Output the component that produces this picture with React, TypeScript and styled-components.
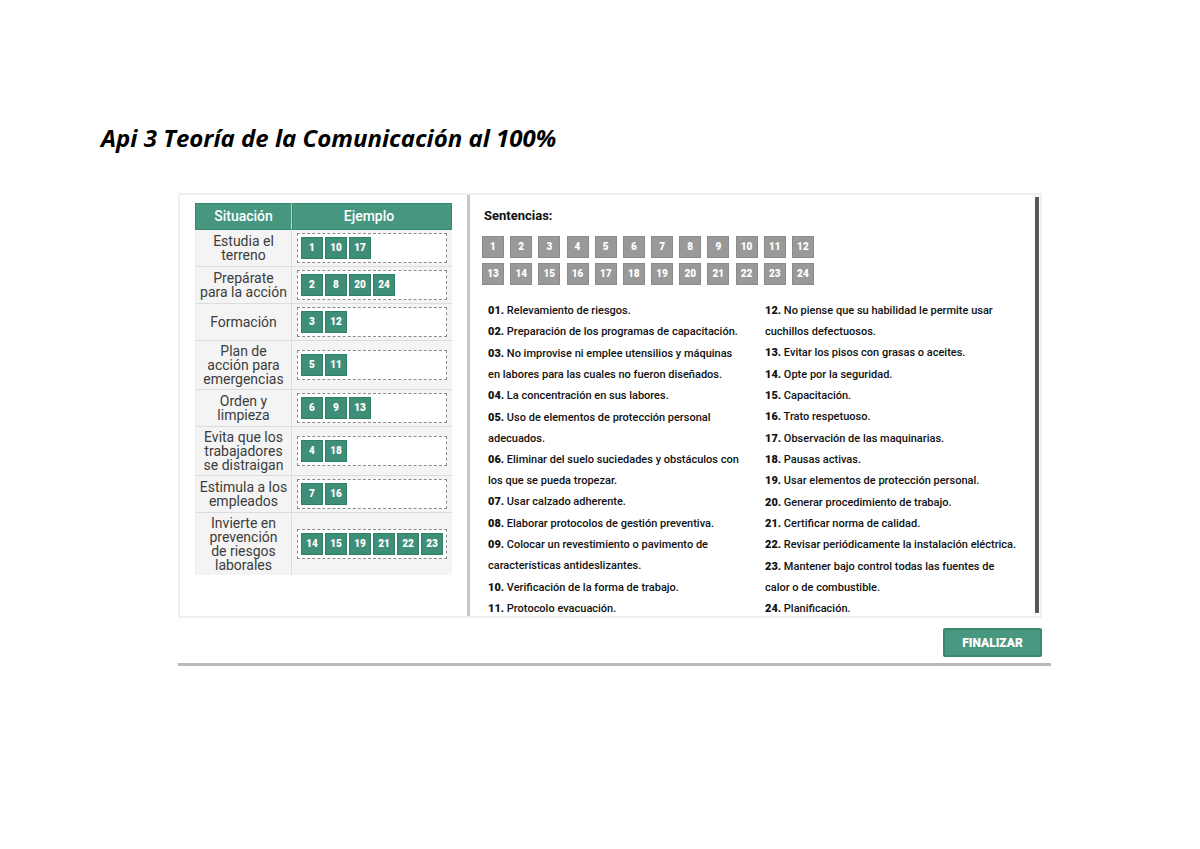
import React from "react";
import styled, { createGlobalStyle } from "styled-components";

const GlobalStyle = createGlobalStyle`
  * { box-sizing: border-box; }
  body {
    margin: 0;
    background: #fff;
    color: #111;
    font-family: Roboto, "Liberation Sans", sans-serif;
  }
`;

const Page = styled.main`
  padding: 120px 149px 40px 101px;
`;

const Title = styled.h1`
  margin: 0;
  font-family: "Comic Sans MS", "Open Sans", sans-serif;
  font-size: 24px;
  line-height: 36px;
  font-weight: 700;
  font-style: italic;
  color: #000;
`;

const Activity = styled.section`
  margin: 37px 0 0 77px;
  padding-bottom: 6px;
  border-bottom: 3px solid #b6babd;
`;

const Panel = styled.div`
  display: flex;
  min-height: 425px;
  margin-right: 9px;
  border: 2px solid #efefef;
`;

const MatchPane = styled.div`
  flex: 0 0 287px;
  padding: 8px 15px;
`;

const MatchTable = styled.table`
  width: 100%;
  border-collapse: separate;
  border-spacing: 0;
  table-layout: fixed;
  background: #f4f4f4;
`;

const HeadCell = styled.th<{ $first?: boolean }>`
  width: ${(p) => (p.$first ? "97px" : "auto")};
  height: 27px;
  padding: ${(p) => (p.$first ? "0 0 2px" : "0 6px 2px 0")};
  border: 1px solid #3a8770;
  border-right-color: ${(p) => (p.$first ? "#a5dccb" : "#3a8770")};
  background: #469680;
  color: #fff;
  font-size: 14px;
  line-height: 16px;
  font-weight: 500;
`;

const Row = styled.tr`
  &:not(:last-child) > * {
    border-bottom: 1px solid #dcdcdc;
  }
`;

const Situation = styled.th`
  height: 37px;
  padding: 3px 0;
  border-right: 1px solid #dcdcdc;
  border-left: 1px solid #ececec;
  color: #3c3c3c;
  font-size: 14px;
  line-height: 14px;
  font-weight: 400;
  text-align: center;
  vertical-align: middle;
  white-space: nowrap;
`;

const Answer = styled.td`
  padding: 0 5px;
  vertical-align: middle;
`;

const DropZone = styled.div`
  display: flex;
  gap: 2px;
  padding: 3px;
  border: 1px dashed #8c8c8c;
  background: #fff;
`;

const Tile = styled.button<{ $placed?: boolean }>`
  width: 22px;
  height: 22px;
  padding: 0;
  border: 1px solid ${(p) => (p.$placed ? "#2f8068" : "#8b8b8b")};
  background: ${(p) => (p.$placed ? "#3f8f78" : "#999")};
  color: #fff;
  font-family: inherit;
  font-size: 10px;
  line-height: 20px;
  font-weight: 900;
  text-align: center;
`;

const SentencePane = styled.div`
  flex: 1;
  display: flex;
  flex-direction: column;
  padding: 13px 17px 0 12px;
  border-left: 3px solid #c6c6c6;
`;

const Heading = styled.h2`
  margin: 0 0 12px 2px;
  font-size: 13px;
  line-height: 16px;
  font-weight: 700;
`;

const TileGrid = styled.div`
  display: grid;
  grid-template-columns: repeat(12, 22px);
  justify-content: space-between;
  row-gap: 5px;
  width: 332px;
`;

const Columns = styled.div`
  flex: 1;
  display: grid;
  grid-template-columns: 277px 1fr;
  margin: 15px 0 -3px 6px;
`;

const SentenceList = styled.ul`
  display: flex;
  flex-direction: column;
  justify-content: space-between;
  margin: 0;
  padding: 0;
  list-style: none;
`;

const Sentence = styled.li`
  font-size: 11px;
  line-height: 21px;
  font-weight: 500;
`;

const Line = styled.span`
  display: block;
`;

const Num = styled.b`
  font-weight: 900;
`;

const ScrollBar = styled.div`
  flex: 0 0 4px;
  margin: 2px 1px 3px 0;
  background: #585858;
`;

const Footer = styled.footer`
  display: flex;
  justify-content: flex-end;
  margin: 10px 9px 0 0;
`;

const FinishButton = styled.button`
  width: 99px;
  height: 29px;
  padding: 0;
  border: 2px solid #3a8871;
  border-radius: 2px;
  background: #489781;
  color: #fff;
  font-family: inherit;
  font-size: 12px;
  line-height: 16px;
  font-weight: 900;
`;

const situations: { lines: string[]; tiles: number[] }[] = [
  { lines: ["Estudia el", "terreno"], tiles: [1, 10, 17] },
  { lines: ["Prepárate", "para la acción"], tiles: [2, 8, 20, 24] },
  { lines: ["Formación"], tiles: [3, 12] },
  { lines: ["Plan de", "acción para", "emergencias"], tiles: [5, 11] },
  { lines: ["Orden y", "limpieza"], tiles: [6, 9, 13] },
  { lines: ["Evita que los", "trabajadores", "se distraigan"], tiles: [4, 18] },
  { lines: ["Estimula a los", "empleados"], tiles: [7, 16] },
  {
    lines: ["Invierte en", "prevención", "de riesgos", "laborales"],
    tiles: [14, 15, 19, 21, 22, 23],
  },
];

const sentences: string[][] = [
  ["Relevamiento de riesgos."],
  ["Preparación de los programas de capacitación."],
  [
    "No improvise ni emplee utensilios y máquinas",
    "en labores para las cuales no fueron diseñados.",
  ],
  ["La concentración en sus labores."],
  ["Uso de elementos de protección personal", "adecuados."],
  [
    "Eliminar del suelo suciedades y obstáculos con",
    "los que se pueda tropezar.",
  ],
  ["Usar calzado adherente."],
  ["Elaborar protocolos de gestión preventiva."],
  [
    "Colocar un revestimiento o pavimento de",
    "características antideslizantes.",
  ],
  ["Verificación de la forma de trabajo."],
  ["Protocolo evacuación."],
  ["No piense que su habilidad le permite usar", "cuchillos defectuosos."],
  ["Evitar los pisos con grasas o aceites."],
  ["Opte por la seguridad."],
  ["Capacitación."],
  ["Trato respetuoso."],
  ["Observación de las maquinarias."],
  ["Pausas activas."],
  ["Usar elementos de protección personal."],
  ["Generar procedimiento de trabajo."],
  ["Certificar norma de calidad."],
  ["Revisar periódicamente la instalación eléctrica."],
  ["Mantener bajo control todas las fuentes de", "calor o de combustible."],
  ["Planificación."],
];

function Sentences({ from, to }: { from: number; to: number }) {
  return (
    <SentenceList>
      {sentences.slice(from - 1, to).map(([first, ...rest], i) => (
        <Sentence key={first}>
          <Line>
            <Num>{String(from + i).padStart(2, "0")}.</Num> {first}
          </Line>
          {rest.map((line) => (
            <Line key={line}>{line}</Line>
          ))}
        </Sentence>
      ))}
    </SentenceList>
  );
}

export default function App() {
  return (
    <Page>
      <GlobalStyle />
      <Title>Api 3 Teoría de la Comunicación al 100%</Title>
      <Activity>
        <Panel>
          <MatchPane>
            <MatchTable>
              <thead>
                <tr>
                  <HeadCell $first scope="col">Situación</HeadCell>
                  <HeadCell scope="col">Ejemplo</HeadCell>
                </tr>
              </thead>
              <tbody>
                {situations.map((s) => (
                  <Row key={s.lines[0]}>
                    <Situation scope="row">
                      {s.lines.map((line) => (
                        <Line key={line}>{line}</Line>
                      ))}
                    </Situation>
                    <Answer>
                      <DropZone>
                        {s.tiles.map((n) => (
                          <Tile key={n} type="button" $placed>{n}</Tile>
                        ))}
                      </DropZone>
                    </Answer>
                  </Row>
                ))}
              </tbody>
            </MatchTable>
          </MatchPane>
          <SentencePane>
            <Heading>Sentencias:</Heading>
            <TileGrid>
              {sentences.map(([first], i) => (
                <Tile key={first} type="button">{i + 1}</Tile>
              ))}
            </TileGrid>
            <Columns>
              <Sentences from={1} to={11} />
              <Sentences from={12} to={24} />
            </Columns>
          </SentencePane>
          <ScrollBar />
        </Panel>
        <Footer>
          <FinishButton type="button">FINALIZAR</FinishButton>
        </Footer>
      </Activity>
    </Page>
  );
}
